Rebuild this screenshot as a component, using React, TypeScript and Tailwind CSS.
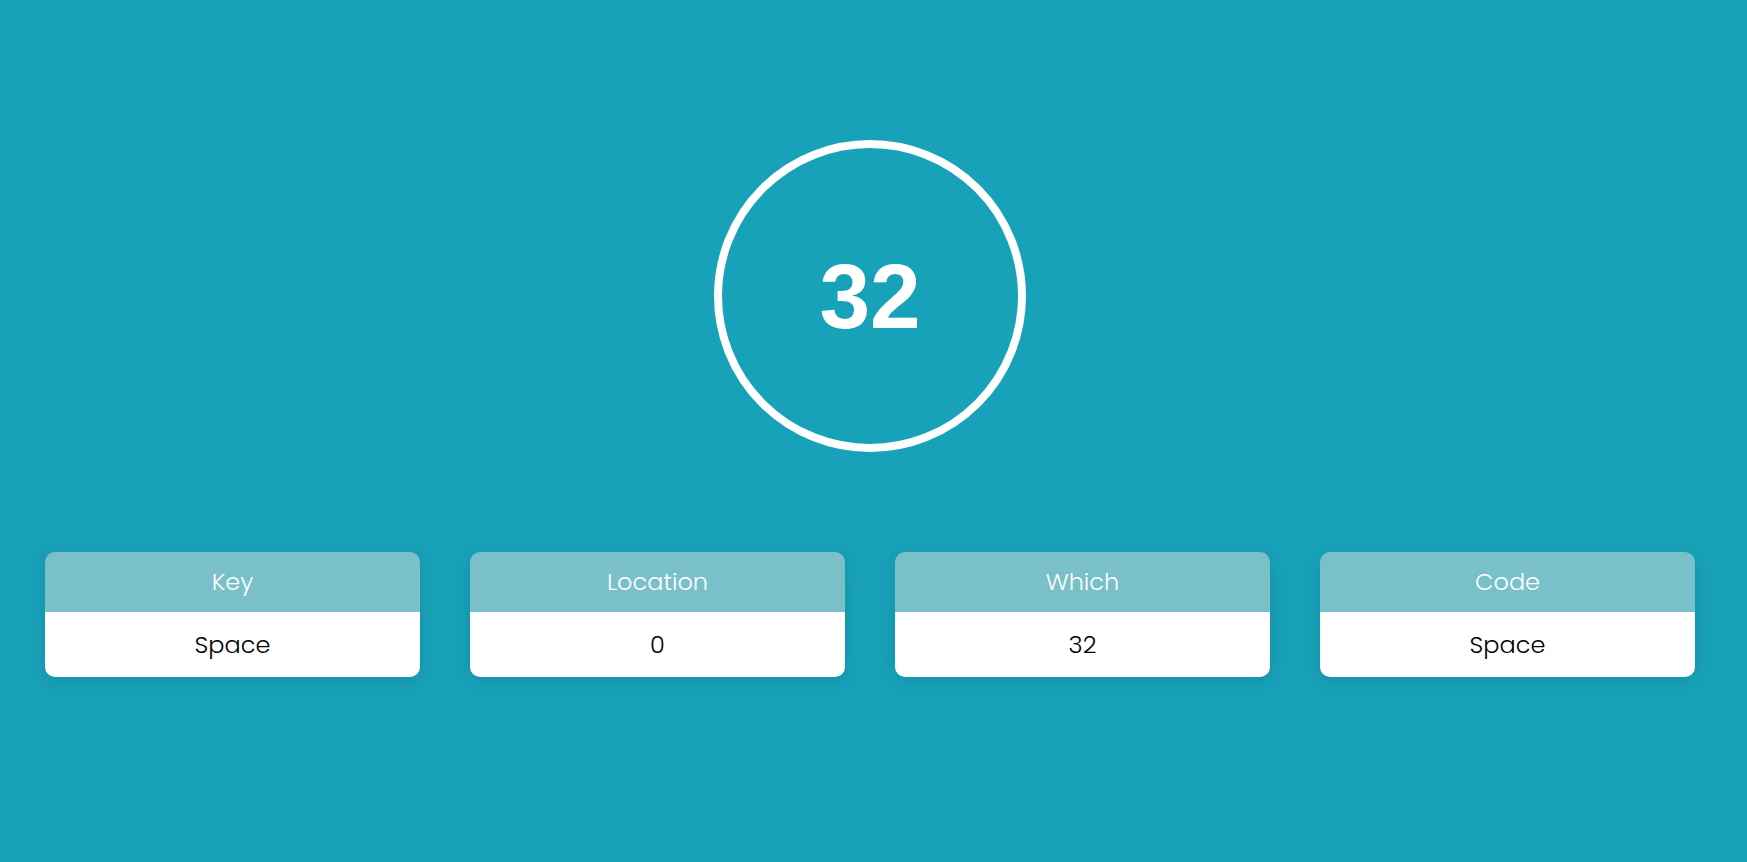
const items = [
  { label: "Key", value: "Space" },
  { label: "Location", value: "0" },
  { label: "Which", value: "32" },
  { label: "Code", value: "Space" },
];

function InfoCard({ label, value }: { label: string; value: string }) {
  return (
    <div className="rounded-[10px] overflow-hidden shadow-[0_4px_20px_rgba(0,40,60,0.15)]">
      <div className="h-[60px] bg-[#79c0c9] flex items-center justify-center text-white text-[24px] font-light">
        {label}
      </div>
      <div className="h-[65px] bg-white flex items-center justify-center text-black text-[24px] font-light">
        {value}
      </div>
    </div>
  );
}

export default function App() {
  return (
    <div className="min-h-[862px] bg-[#18a2b9] font-['Poppins','Open_Sans',sans-serif] pt-[140px] pl-[45px] pr-[52px]">
      <div className="flex justify-center">
        <div className="w-[312px] h-[312px] rounded-full border-[8px] border-white flex items-center justify-center">
          <span className="font-['Liberation_Sans',Arial,sans-serif] font-bold text-white text-[91px] leading-none">
            32
          </span>
        </div>
      </div>
      <div className="grid grid-cols-4 gap-[50px] mt-[100px]">
        {items.map((it) => (
          <InfoCard key={it.label} label={it.label} value={it.value} />
        ))}
      </div>
    </div>
  );
}
